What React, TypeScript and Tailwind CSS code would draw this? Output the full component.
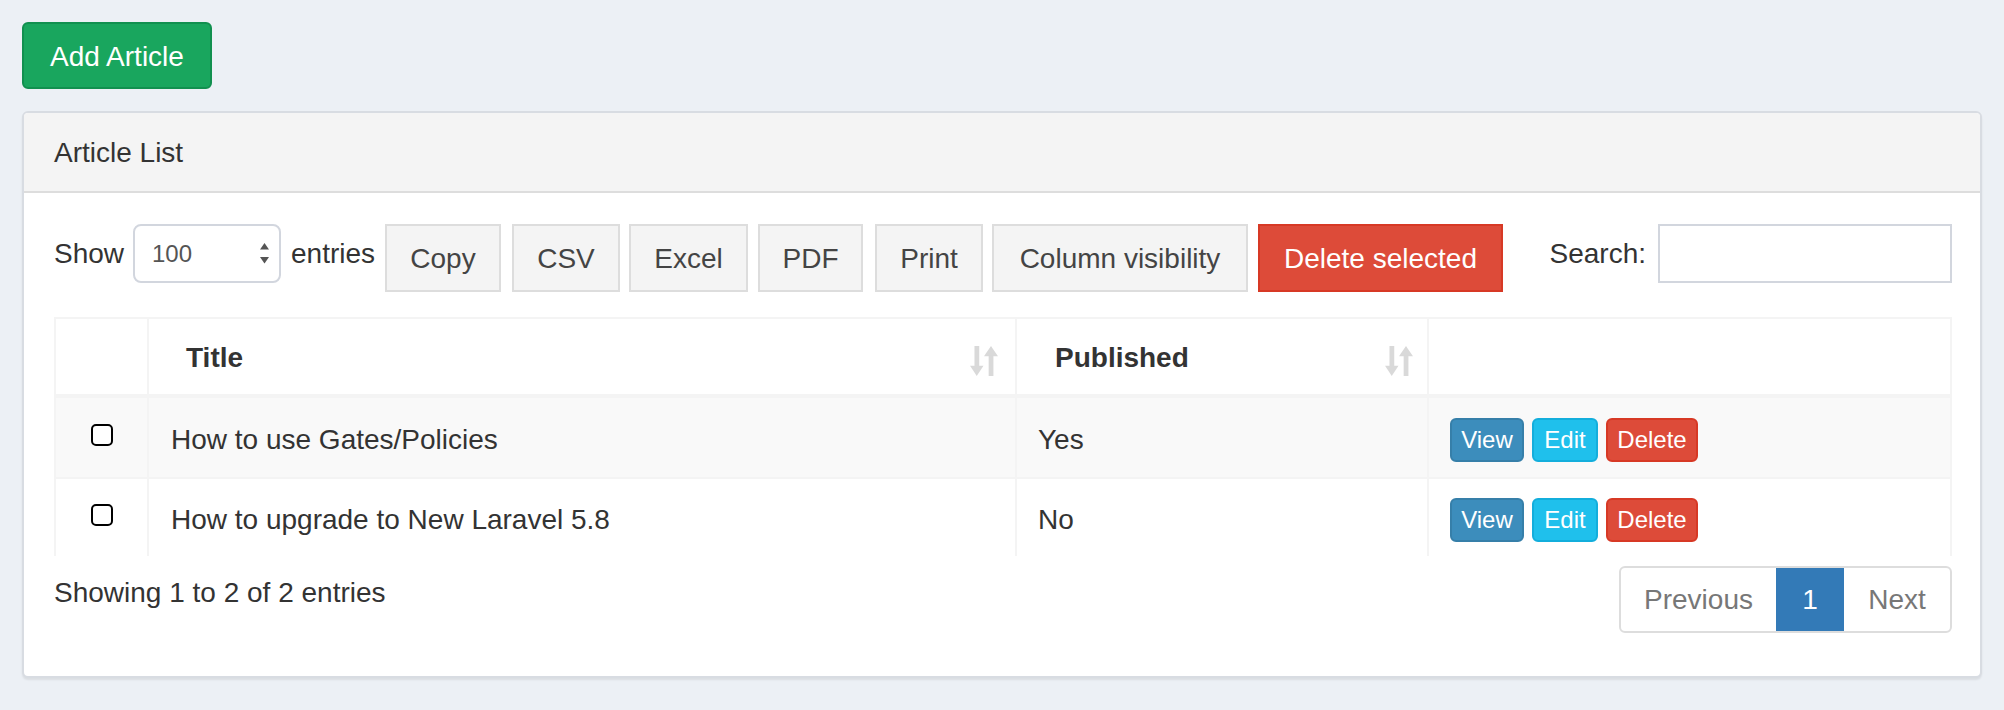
import React from "react";

function SortIcon() {
  return (
    <svg width="28" height="30" viewBox="0 0 27 29" className="shrink-0 mt-[6px]">
      <rect x="4.3" y="0" width="4.6" height="20" fill="#d9d9d9" />
      <polygon points="0,19 13,19 6.5,29" fill="#d9d9d9" />
      <polygon points="13.5,10 27,10 20.25,0" fill="#d9d9d9" />
      <rect x="18" y="9" width="4.6" height="20" fill="#d9d9d9" />
    </svg>
  );
}

function SelectArrows() {
  return (
    <svg width="9" height="21" viewBox="0 0 9 21" className="shrink-0">
      <polygon points="0,6.5 9,6.5 4.5,0" fill="#555" />
      <polygon points="0,14 9,14 4.5,20.5" fill="#555" />
    </svg>
  );
}

function Checkbox() {
  return (
    <input
      type="checkbox"
      className="appearance-none w-[22px] h-[22px] border-2 border-black rounded-[5px] bg-white -mt-[10px]"
    />
  );
}

function ActionButtons() {
  return (
    <div className="flex items-center gap-[8px] text-[24px] text-white">
      <button className="w-[74px] h-[44px] rounded-[6px] bg-[#3c8dbc] border-2 border-[#367fa9] flex items-center justify-center leading-none">
        View
      </button>
      <button className="w-[66px] h-[44px] rounded-[6px] bg-[#1fc0ec] border-2 border-[#13aedc] flex items-center justify-center leading-none">
        Edit
      </button>
      <button className="w-[92px] h-[44px] rounded-[6px] bg-[#dd4b39] border-2 border-[#d73925] flex items-center justify-center leading-none">
        Delete
      </button>
    </div>
  );
}

const toolbarButtons: { label: string; cls: string }[] = [
  { label: "Copy", cls: "w-[116px]" },
  { label: "CSV", cls: "w-[108px] ml-[11px]" },
  { label: "Excel", cls: "w-[119px] ml-[9px]" },
  { label: "PDF", cls: "w-[105px] ml-[10px]" },
  { label: "Print", cls: "w-[108px] ml-[12px]" },
  { label: "Column visibility", cls: "w-[256px] ml-[9px]" },
];

const rows = [
  { title: "How to use Gates/Policies", published: "Yes", h: "h-[81px] border-b-2 bg-[#f9f9f9]" },
  { title: "How to upgrade to New Laravel 5.8", published: "No", h: "h-[77px] bg-white" },
];

export default function App() {
  return (
    <div className="min-h-screen w-full bg-[#ecf0f5] pt-[22px] px-[22px] font-['Liberation_Sans',Arial,sans-serif] text-[28px] text-[#333]">
      <button className="w-[190px] h-[67px] rounded-[6px] bg-[#19a65e] border-2 border-[#11904f] text-white flex items-center justify-center leading-none pt-[2px]">
        Add Article
      </button>

      <div className="mt-[22px] w-[1960px] rounded-[6px] bg-white border-2 border-[#d8dce2] shadow-[0_2px_2px_rgba(0,0,0,0.08)] overflow-hidden">
        <div className="h-[80px] bg-[#f4f4f4] border-b-2 border-[#dddddd] flex items-center pl-[30px] pt-[2px] leading-none">
          Article List
        </div>

        <div className="pl-[30px] pr-[28px] pt-[31px] pb-[43px]">
          {/* toolbar */}
          <div className="flex items-start h-[68px]">
            <div className="w-[79px] h-[59px] flex items-center leading-none">Show</div>
            <div className="w-[148px] h-[59px] rounded-[8px] border-2 border-[#d2d6de] flex items-center justify-between pl-[17px] pr-[10px] text-[24px] text-[#555] leading-none">
              <span>100</span>
              <SelectArrows />
            </div>
            <div className="ml-[10px] w-[94px] h-[59px] flex items-center leading-none">entries</div>
            {toolbarButtons.map((b) => (
              <button
                key={b.label}
                className={`${b.cls} h-[68px] bg-[#f4f4f4] border-2 border-[#dddddd] text-[#444] flex items-center justify-center leading-none pt-[2px]`}
              >
                {b.label}
              </button>
            ))}
            <button className="w-[245px] ml-[10px] h-[68px] bg-[#dd4b39] border-2 border-[#d73925] text-white flex items-center justify-center leading-none pt-[2px]">
              Delete selected
            </button>
            <div className="ml-auto h-[59px] flex items-center leading-none">Search:</div>
            <input
              type="text"
              className="ml-[12px] w-[294px] h-[59px] border-2 border-[#d2d6de] bg-white outline-none"
            />
          </div>

          {/* table */}
          <div className="mt-[25px] w-[1898px]">
            <div className="grid grid-cols-[95px_868px_412px_523px] h-[81px] border-t-2 border-b-4 border-[#f4f4f4] font-bold">
              <div className="border-l-2 border-r-2 border-[#f4f4f4]" />
              <div className="border-r-2 border-[#f4f4f4] flex items-center justify-between pl-[37px] pr-[17px] pt-[3px] leading-none">
                <span>Title</span>
                <SortIcon />
              </div>
              <div className="border-r-2 border-[#f4f4f4] flex items-center justify-between pl-[38px] pr-[14px] pt-[3px] leading-none">
                <span>Published</span>
                <SortIcon />
              </div>
              <div className="border-r-2 border-[#f4f4f4]" />
            </div>
            {rows.map((r) => (
              <div
                key={r.title}
                className={`grid grid-cols-[95px_868px_412px_523px] border-[#f4f4f4] ${r.h}`}
              >
                <div className="border-l-2 border-r-2 border-[#f4f4f4] flex items-center justify-center pt-[5px]">
                  <Checkbox />
                </div>
                <div className="border-r-2 border-[#f4f4f4] flex items-center pl-[22px] pt-[5px] leading-none">
                  {r.title}
                </div>
                <div className="border-r-2 border-[#f4f4f4] flex items-center pl-[21px] pt-[5px] leading-none">
                  {r.published}
                </div>
                <div className="border-r-2 border-[#f4f4f4] flex items-center pl-[21px] pt-[5px]">
                  <ActionButtons />
                </div>
              </div>
            ))}
          </div>

          {/* footer */}
          <div className="flex items-start justify-between">
            <div className="mt-[23px] leading-[28px]">Showing 1 to 2 of 2 entries</div>
            <div className="mt-[10px] flex h-[67px] rounded-[6px] border-2 border-[#dddddd] overflow-hidden">
              <div className="w-[155px] flex items-center justify-center text-[#777] leading-none">Previous</div>
              <div className="w-[68px] -my-[2px] bg-[#337ab7] text-white flex items-center justify-center leading-none">1</div>
              <div className="w-[106px] flex items-center justify-center text-[#777] leading-none">Next</div>
            </div>
          </div>
        </div>
      </div>
    </div>
  );
}
